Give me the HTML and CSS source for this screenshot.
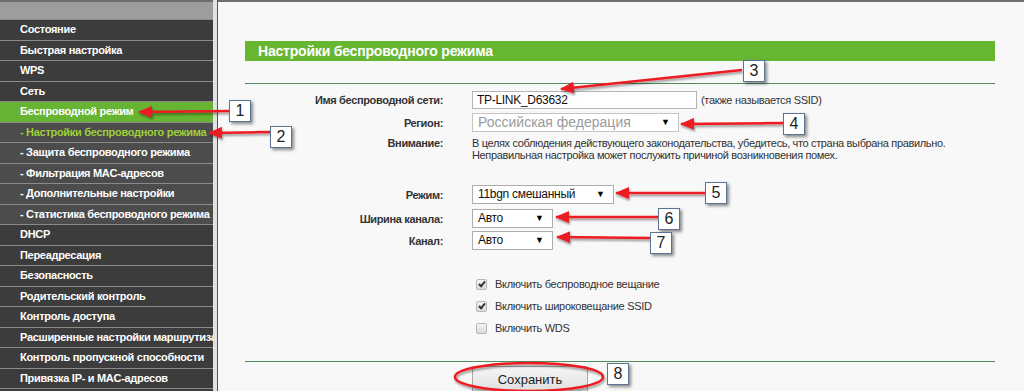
FILE: index.html
```html
<!DOCTYPE html>
<html lang="ru">

<head>
    <meta charset="UTF-8">
    <title>Настройки беспроводного режима</title>
    <link rel="stylesheet" href="styles.css">
</head>

<body>
    <div class="page">
        <div class="menu">
            <div class="menu-top"></div>
            <a class="item">Состояние</a>
            <a class="item">Быстрая настройка</a>
            <a class="item">WPS</a>
            <a class="item">Сеть</a>
            <a class="item active">Беспроводной режим</a>
            <a class="item sub current">- Настройки беспроводного режима</a>
            <a class="item sub">- Защита беспроводного режима</a>
            <a class="item sub">- Фильтрация MAC-адресов</a>
            <a class="item sub">- Дополнительные настройки</a>
            <a class="item sub">- Статистика беспроводного режима</a>
            <a class="item">DHCP</a>
            <a class="item">Переадресация</a>
            <a class="item">Безопасность</a>
            <a class="item">Родительский контроль</a>
            <a class="item">Контроль доступа</a>
            <a class="item">Расширенные настройки маршрутизации</a>
            <a class="item">Контроль пропускной способности</a>
            <a class="item">Привязка IP- и MAC-адресов</a>
            <a class="item">Динамический DNS</a>
        </div>
        <div class="menu-edge"></div>

        <div class="content">
            <div class="title-bar">Настройки беспроводного режима</div>
            <div class="divider first"></div>

            <div class="form">
                <div class="row r-name">
                    <label>Имя беспроводной сети:</label>
                    <div class="field">
                        <span class="text-input">TP-LINK_D63632</span>
                        <span class="hint">(также называется SSID)</span>
                    </div>
                </div>
                <div class="row r-region">
                    <label>Регион:</label>
                    <div class="field">
                        <span class="select disabled w-region">Российская федерация<i>&#9660;</i></span>
                    </div>
                </div>
                <div class="row r-warn">
                    <label>Внимание:</label>
                    <div class="field note">
                        В целях соблюдения действующего законодательства, убедитесь, что страна выбрана правильно.<br>
                        Неправильная настройка может послужить причиной возникновения помех.
                    </div>
                </div>
                <div class="row r-mode">
                    <label>Режим:</label>
                    <div class="field">
                        <span class="select w-mode">11bgn смешанный<i>&#9660;</i></span>
                    </div>
                </div>
                <div class="row r-width">
                    <label>Ширина канала:</label>
                    <div class="field">
                        <span class="select w-small">Авто<i>&#9660;</i></span>
                    </div>
                </div>
                <div class="row r-chan">
                    <label>Канал:</label>
                    <div class="field">
                        <span class="select w-small">Авто<i>&#9660;</i></span>
                    </div>
                </div>

                <div class="checks">
                    <div class="check"><span class="box on"></span>Включить беспроводное вещание</div>
                    <div class="check"><span class="box on"></span>Включить широковещание SSID</div>
                    <div class="check"><span class="box"></span>Включить WDS</div>
                </div>
            </div>

            <div class="divider last"></div>
            <div class="buttons">
                <button class="save">Сохранить</button>
            </div>
        </div>
    </div>

    <!-- annotation layer -->
    <svg class="marks" width="1024" height="391" viewBox="0 0 1024 391">
        <defs>
            <marker id="head" markerUnits="userSpaceOnUse" markerWidth="14" markerHeight="12" refX="13" refY="6" orient="auto">
                <path d="M0,0 L14,6 L0,12 z" fill="#ec1c24"/>
            </marker>
            <filter id="shade" x="-10%" y="-50%" width="120%" height="200%">
                <feDropShadow dx="1" dy="2" stdDeviation="1.2" flood-color="#000" flood-opacity="0.4"/>
            </filter>
        </defs>
        <g stroke="#ec1c24" stroke-width="2.5" fill="none" filter="url(#shade)">
            <path d="M229,111 L139,112" marker-end="url(#head)"/>
            <path d="M270,132 L209,133" marker-end="url(#head)"/>
            <path d="M742,70 L561,89" marker-end="url(#head)"/>
            <path d="M783,123 L681,124" marker-end="url(#head)"/>
            <path d="M705,193 L616,193" marker-end="url(#head)"/>
            <path d="M658,217 L556,217" marker-end="url(#head)"/>
            <path d="M650,238 L557,237" marker-end="url(#head)"/>
            <ellipse cx="529" cy="377" rx="74" ry="14"/>
        </g>
    </svg>
    <div class="num n1">1</div>
    <div class="num n2">2</div>
    <div class="num n3">3</div>
    <div class="num n4">4</div>
    <div class="num n5">5</div>
    <div class="num n6">6</div>
    <div class="num n7">7</div>
    <div class="num n8">8</div>
</body>

</html>
```

FILE: styles.css
```css
html, body {
    margin: 0;
    padding: 0;
}

body {
    width: 1024px;
    height: 391px;
    overflow: hidden;
    position: relative;
    font-family: "Liberation Sans", Arial, sans-serif;
    background: #f8f8f8;
}

.page {
    display: flex;
    height: 391px;
}

/* left menu */

.menu {
    width: 213px;
    flex: none;
    overflow: hidden;
    background: #3c3c3c;
}

.menu-top {
    height: 17px;
    border-top: 2px solid #6c6c6c;
    background: #9d9d9d;
}

.item {
    display: block;
    height: 19.5px;
    line-height: 19.5px;
    border-top: 1px solid #8a8a8a;
    padding-left: 20px;
    font-size: 11px;
    font-weight: bold;
    letter-spacing: -0.3px;
    color: #fff;
    white-space: nowrap;
    background: #3c3c3c;
}

.item.sub {
    background: #4c4c4c;
}

.item.active {
    background: #66b432;
}

.item.current {
    color: #9ed13a;
}

.menu-edge {
    width: 4px;
    flex: none;
    background: #e2e2e2;
    border-right: 1px solid #555;
}

/* main area */

.content {
    flex: 1;
    border-top: 2px solid #6e6e6e;
    padding: 39px 29px 0 27px;
}

.title-bar {
    height: 20px;
    line-height: 20px;
    padding-left: 13px;
    background: #66b632;
    color: #fff;
    font-size: 14px;
    font-weight: bold;
    letter-spacing: -0.2px;
}

.divider {
    border-top: 1px solid #4f8b5d;
}

.divider.first {
    margin-top: 22px;
}

.divider.last {
    margin-top: 22px;
}

.form {
    font-size: 11px;
    color: #333;
}

.row {
    display: grid;
    grid-template-columns: 198px 1fr;
    column-gap: 29px;
    align-items: center;
}

.row label {
    text-align: right;
    font-weight: bold;
    letter-spacing: -0.35px;
    color: #333;
}

.field {
    display: flex;
    align-items: center;
}

.r-name { margin-top: 7px; }
.r-region { margin-top: 4px; }
.r-warn { margin-top: 5px; align-items: start; }
.r-warn label { line-height: 12px; }
.r-mode { margin-top: 24px; }
.r-width { margin-top: 5px; }
.r-chan { margin-top: 3px; }

.text-input {
    display: block;
    box-sizing: border-box;
    width: 225px;
    height: 18px;
    line-height: 16px;
    padding-left: 4px;
    border: 1px solid #b4b4b4;
    background: #fff;
    font-size: 12px;
    letter-spacing: -0.3px;
    color: #111;
}

.hint {
    margin-left: 4px;
    font-size: 11px;
    letter-spacing: -0.3px;
    color: #333;
}

.select {
    display: block;
    position: relative;
    box-sizing: border-box;
    height: 19px;
    line-height: 17px;
    padding-left: 5px;
    border: 1px solid #acacac;
    background: #fff;
    font-size: 12px;
    letter-spacing: -0.3px;
    color: #111;
}

.select i {
    position: absolute;
    right: 8px;
    top: 0;
    font-style: normal;
    font-size: 9px;
    letter-spacing: 0;
    color: #000;
}

.select.disabled {
    color: #9b9b9b;
    border-color: #c4c4c4;
    font-size: 14px;
    letter-spacing: 0;
}

.w-region { width: 207px; }
.w-mode { width: 142px; }
.w-small { width: 81px; }

.note {
    display: block;
    font-size: 11px;
    line-height: 12px;
    letter-spacing: -0.35px;
    color: #333;
    white-space: nowrap;
}

.checks {
    margin-top: 23px;
    padding-left: 231px;
}

.check {
    display: flex;
    align-items: center;
    height: 22px;
    font-size: 11px;
    letter-spacing: -0.3px;
    color: #333;
}

.box {
    position: relative;
    width: 11px;
    height: 11px;
    box-sizing: border-box;
    margin-right: 8px;
    border: 1px solid #b8b8b8;
    border-radius: 2px;
    background: linear-gradient(#f4f4f4, #dcdcdc);
}

.box.on::after {
    content: "";
    position: absolute;
    left: 3px;
    top: 0px;
    width: 2px;
    height: 5px;
    border: solid #333;
    border-width: 0 2px 2px 0;
    transform: rotate(40deg);
}

.buttons {
    padding-left: 227px;
    padding-top: 4px;
}

.save {
    width: 116px;
    height: 27px;
    border: 1px solid #a8a8a8;
    border-radius: 2px;
    background: linear-gradient(#f6f6f6, #dedede);
    font-family: "Liberation Sans", Arial, sans-serif;
    font-size: 13px;
    color: #222;
}

/* annotations drawn over the screenshot */

.marks {
    position: absolute;
    left: 0;
    top: 0;
    pointer-events: none;
}

.num {
    position: absolute;
    width: 20px;
    height: 20px;
    border: 1px solid #5a7594;
    background: #fff;
    box-shadow: 2px 2px 3px rgba(0, 0, 0, 0.45);
    font-size: 16px;
    line-height: 20px;
    text-align: center;
    color: #222;
}

.n1 { left: 229px; top: 100px; }
.n2 { left: 270px; top: 126px; }
.n3 { left: 743px; top: 60px; }
.n4 { left: 783px; top: 113px; }
.n5 { left: 705px; top: 182px; }
.n6 { left: 658px; top: 208px; }
.n7 { left: 650px; top: 232px; }
.n8 { left: 607px; top: 363px; }
```
